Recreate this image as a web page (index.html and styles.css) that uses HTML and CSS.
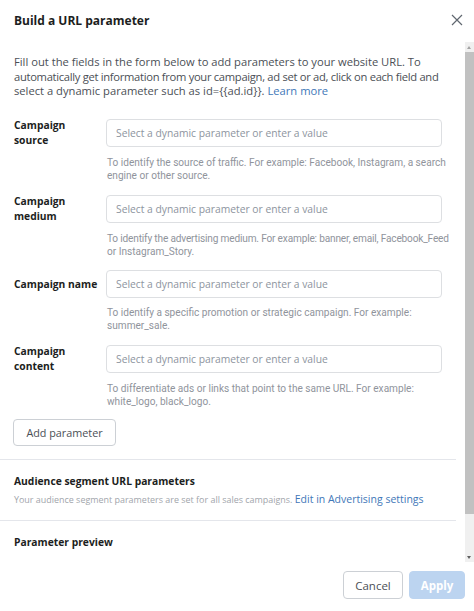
FILE: index.html
```html
<!DOCTYPE html>
<html lang="en">
<head>
<meta charset="utf-8">
<title>Build a URL parameter</title>
<link rel="stylesheet" href="styles.css">
</head>
<body>
<div class="dialog">
  <header class="dlg-header">
    <h1 class="dlg-title">Build a URL parameter</h1>
    <button class="close-btn" aria-label="Close">
      <svg width="12" height="12" viewBox="0 0 12 12"><path d="M1 1 L11 11 M11 1 L1 11" stroke="#606770" stroke-width="1.2" fill="none"/></svg>
    </button>
  </header>
  <div class="dlg-body">
    <div class="content">
      <div class="form-area">
        <p class="intro">Fill out the fields in the form below to add parameters to your website URL. To<br><span class="tight">automatically get information from your campaign, ad set or ad, click on each field and</span><br>select a dynamic parameter such as id={{ad.id}}. <a class="link" href="#">Learn more</a></p>

        <div class="field">
          <label class="field-label">Campaign source</label>
          <input class="field-input" type="text" placeholder="Select a dynamic parameter or enter a value">
          <div class="field-help">To identify the source of traffic. For example: Facebook, Instagram, a search<br>engine or other source.</div>
        </div>

        <div class="field">
          <label class="field-label">Campaign medium</label>
          <input class="field-input" type="text" placeholder="Select a dynamic parameter or enter a value">
          <div class="field-help"><span class="tight">To identify the advertising medium. For example: banner, email, Facebook_Feed</span><br>or Instagram_Story.</div>
        </div>

        <div class="field">
          <label class="field-label">Campaign name</label>
          <input class="field-input" type="text" placeholder="Select a dynamic parameter or enter a value">
          <div class="field-help">To identify a specific promotion or strategic campaign. For example:<br>summer_sale.</div>
        </div>

        <div class="field">
          <label class="field-label">Campaign content</label>
          <input class="field-input" type="text" placeholder="Select a dynamic parameter or enter a value">
          <div class="field-help">To differentiate ads or links that point to the same URL. For example:<br>white_logo, black_logo.</div>
        </div>

        <button class="btn add-btn">Add parameter</button>
      </div>

      <section class="section">
        <h2 class="section-title">Audience segment URL parameters</h2>
        <p class="section-text">Your audience segment parameters are set for all sales campaigns. <a class="link" href="#">Edit in Advertising settings</a></p>
      </section>

      <section class="section">
        <h2 class="section-title">Parameter preview</h2>
      </section>
    </div>
    <div class="scrollbar">
      <div class="sb-arrow sb-up"></div>
      <div class="sb-track"><div class="sb-thumb"></div></div>
      <div class="sb-arrow sb-down"></div>
    </div>
  </div>
  <footer class="dlg-footer">
    <button class="btn cancel-btn">Cancel</button>
    <button class="btn apply-btn">Apply</button>
  </footer>
</div>
</body>
</html>
```

FILE: styles.css
```css
* { box-sizing: border-box; }
html, body { margin: 0; padding: 0; background: #fff; }
body {
  font-family: "Open Sans", "Noto Sans", sans-serif;
  color: #1c1e21;
  width: 474px;
  height: 611px;
  overflow: hidden;
}
.dialog {
  display: flex;
  flex-direction: column;
  height: 611px;
}
.dlg-header {
  height: 42px;
  display: flex;
  align-items: center;
  justify-content: space-between;
  padding: 0 10px 2px 14px;
}
.dlg-title {
  margin: 0;
  font-size: 12px;
  font-weight: 700;
  color: #1c1e21;
}
.close-btn {
  border: 0;
  background: none;
  padding: 0;
  width: 14px;
  height: 14px;
  display: flex;
  align-items: center;
  justify-content: center;
}
.dlg-body {
  flex: 1;
  display: flex;
  min-height: 0;
}
.content {
  width: 456px;
  overflow: hidden;
}
.form-area {
  padding: 13px 14px 13px 14px;
}
.intro {
  margin: 0 -12px 19px 0;
  font-size: 11.2px;
  line-height: 14.7px;
  white-space: nowrap;
  color: #4b4f56;
}
.intro .tight { letter-spacing: -0.3px; }
.link {
  color: #4177b8;
  text-decoration: none;
}
.field {
  display: grid;
  grid-template-columns: 92px 336px;
  align-items: center;
  margin-bottom: 12px;
}
.field-label {
  font-size: 10.3px;
  font-weight: 700;
  line-height: 15px;
  color: #1c1e21;
  padding-right: 7px;
}
.field-input {
  height: 28px;
  border: 1px solid #dddfe2;
  border-radius: 4px;
  padding: 0 9px;
  font-family: "Open Sans", "Noto Sans", sans-serif;
  font-size: 10.3px;
  color: #1c1e21;
  outline: none;
}
.field-input::placeholder { color: #8d949e; }
.field-help {
  grid-column: 2;
  margin-top: 9px;
  padding-left: 1px;
  white-space: nowrap;
  font-family: Roboto, "Liberation Sans", sans-serif;
  font-size: 10.1px;
  line-height: 12.5px;
  color: #90949c;
}
.field-help .tight { letter-spacing: -0.17px; }
.btn {
  font-family: "Open Sans", "Noto Sans", sans-serif;
  font-size: 11.5px;
  border-radius: 4px;
  cursor: pointer;
}
.add-btn {
  margin-top: -2px;
  margin-left: -1px;
  height: 27px;
  width: 103px;
  background: #fff;
  border: 1px solid #ccd0d5;
  color: #4b4f56;
  font-size: 10.8px;
}
.section {
  border-top: 1px solid #e4e6eb;
  padding: 14px 14px 12px;
}
.section-title {
  margin: 0;
  font-size: 10.3px;
  font-weight: 700;
  line-height: 15px;
  color: #1c1e21;
}
.section-text {
  margin: 2px 0 0;
  font-size: 8.95px;
  line-height: 16px;
  color: #a1a5ab;
}
.section-text .link { font-size: 10.5px; }
.scrollbar {
  margin-left: 9px;
  width: 9px;
  background: #f0f0f0;
  display: flex;
  flex-direction: column;
}
.sb-arrow {
  height: 10px;
  position: relative;
}
.sb-up::after, .sb-down::after {
  content: "";
  position: absolute;
  left: 2px;
  border-left: 2.5px solid transparent;
  border-right: 2.5px solid transparent;
}
.sb-up::after { top: 4px; border-bottom: 3px solid #a3a3a3; }
.sb-down::after { top: 4px; border-top: 3px solid #606060; }
.sb-track {
  flex: 1;
  display: flex;
  flex-direction: column;
}
.sb-thumb {
  height: 462px;
  background: #c1c1c1;
}
.dlg-footer {
  height: 49px;
  display: flex;
  justify-content: flex-end;
  align-items: flex-start;
  gap: 6px;
  padding: 9px 9px 0 0;
}
.cancel-btn {
  width: 60px;
  height: 28px;
  background: #fff;
  border: 1px solid #ccd0d5;
  color: #4b4f56;
}
.apply-btn {
  width: 56px;
  height: 28px;
  background: #bcd4f0;
  border: 1px solid #bcd4f0;
  color: #fff;
  font-weight: 700;
}
```
